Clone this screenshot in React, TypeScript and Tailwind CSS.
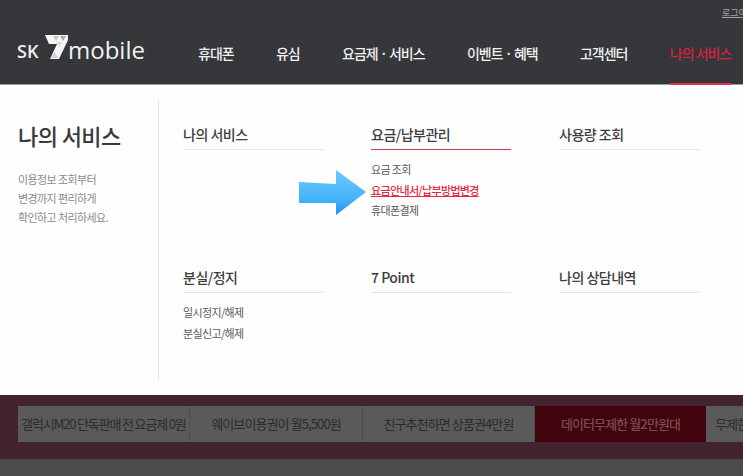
const font = { fontFamily: '"Noto Sans CJK KR", "Noto Sans", sans-serif' };

const nav = ["휴대폰", "유심", "요금제 · 서비스", "이벤트 · 혜택", "고객센터"];
const tabs = [
  { label: "갤럭시M20 단독판매 전 요금제 0원", w: "w-[172px] tracking-[-1.15px]" },
  { label: "웨이브이용권이 월5,500원", w: "w-[173px] tracking-[-0.9px]" },
  { label: "친구추천하면 상품권4만원", w: "w-[172px] tracking-[-0.9px]" },
];

function Logo() {
  return (
    <div className="flex items-end h-[24px]">
      <span className="text-[18px] leading-[18px] font-semibold text-[#f1f1f1] w-[28px] shrink-0 -mb-[1px]" style={{ fontFamily: '"Open Sans", sans-serif' }}>SK</span>
      <svg width="24" height="24" viewBox="0 0 24 24" className="shrink-0">
        <polygon points="0,0 23,0 23,5 14,24 5,24 12,9 4,9" fill="#f6f6f6" />
        <polygon points="8,1 14,1 11,6" fill="#c6c6c8" />
        <polygon points="15,1 21,1 18,6" fill="#a9a9ab" />
        <polygon points="11,7 17,7 14,12" fill="#dcdcdd" />
        <polygon points="6,23 9.5,17 13,23" fill="#cfcfd0" />
      </svg>
      <span className="text-[24px] leading-[24px] font-medium text-[#f1f1f1] -ml-[1px] -mb-[3px]" style={{ fontFamily: '"Open Sans", sans-serif' }}>mobile</span>
    </div>
  );
}

function Group({ title, active, items = [] }: { title: string; active?: boolean; items?: { t: string; on?: boolean }[] }) {
  return (
    <div className="w-[140px]">
      <div className={`h-[27px] border-b text-[14px] leading-[22px] font-medium tracking-[-0.5px] text-[#3d3d3d] ${active ? "border-[#d9364a]" : "border-[#e4e4e4]"}`}>{title}</div>
      <ul className="pt-[9px] whitespace-nowrap">
        {items.map((i) => (
          <li key={i.t} className={`h-[20.5px] text-[11px] leading-[20px] tracking-[-0.65px] ${i.on ? "text-[#e5274a] underline font-medium" : "text-[#5a5a5a]"}`}>{i.t}</li>
        ))}
      </ul>
    </div>
  );
}

export default function App() {
  return (
    <div className="relative w-[743px] h-[476px] overflow-hidden bg-[#4b4b4b]" style={font}>
      <header className="relative h-[85px] bg-[#36373b] border-b border-[#9a9a9c] flex items-start">
        <div className="absolute right-0 top-[7px] text-[9px] leading-[12px] text-[#a5a5a7] underline w-[21px] overflow-hidden whitespace-nowrap">로그아웃</div>
        <div className="ml-[17px] mt-[35px] w-[181px] shrink-0"><Logo /></div>
        <nav className="flex gap-[42.3px] mt-[43px] h-[42px] whitespace-nowrap tracking-[-1px]">
          {nav.map((n) => (
            <span key={n} className="text-[14px] leading-[20px] font-medium text-[#f0f0f0]">{n}</span>
          ))}
          <span className="h-[42px] border-b-2 border-[#e8304f] text-[14px] leading-[20px] font-medium text-[#d8203f]">나의 서비스</span>
        </nav>
      </header>

      <main className="relative h-[310px] bg-[#fefefe] flex pt-[15px]">
        <aside className="w-[159px] h-[280px] border-r border-[#e2e2e2] pl-[18px] pt-[19px] shrink-0">
          <h1 className="text-[22px] leading-[32px] font-medium tracking-[-0.6px] text-[#3a3a3c]">나의 서비스</h1>
          <p className="mt-[19px] text-[11px] leading-[19px] tracking-[-0.6px] text-[#8a8a8a]">이용정보 조회부터<br />변경까지 편리하게<br />확인하고 처리하세요.</p>
        </aside>
        <div className="ml-[24px] grid grid-cols-[140px_140px_140px] grid-rows-[143px_auto] gap-x-[48px] pt-[23px]">
          <Group title="나의 서비스" />
          <Group title="요금/납부관리" active items={[{ t: "요금 조회" }, { t: "요금안내서/납부방법변경", on: true }, { t: "휴대폰결제" }]} />
          <Group title="사용량 조회" />
          <Group title="분실/정지" items={[{ t: "일시정지/해제" }, { t: "분실신고/해제" }]} />
          <Group title="7 Point" />
          <Group title="나의 상담내역" />
        </div>
        <svg className="absolute left-[299px] top-[85px]" width="67" height="46" viewBox="0 0 67 46">
          <defs>
            <linearGradient id="a" x1="0" y1="0" x2="0" y2="1">
              <stop offset="0" stopColor="#6cc8ff" />
              <stop offset="0.65" stopColor="#45b4fb" />
              <stop offset="1" stopColor="#1f8ff0" />
            </linearGradient>
          </defs>
          <polygon points="0,12 37,14 37,0 67,22 37,45 37,33 0,33" fill="url(#a)" />
        </svg>
      </main>

      <section className="h-[64px] bg-[#412430] pt-[11px] pl-[18px] flex items-start whitespace-nowrap">
        {tabs.map((t) => (
          <div key={t.label} className={`${t.w} h-[36px] shrink-0 bg-[#5a5a5a] border-r border-[#4e4e4e] text-[13px] leading-[36px] text-center text-[#2b2b2b]`}>{t.label}</div>
        ))}
        <div className="w-[171px] h-[36px] shrink-0 bg-[#42040c] text-[13px] leading-[36px] text-center font-medium text-[#7a4a50] tracking-[-0.9px]">데이터무제한 월2만원대</div>
        <div className="flex-1 h-[36px] bg-[#5a5a5a] pl-[9px] text-[13px] leading-[36px] text-[#2b2b2b] overflow-hidden tracking-[-0.9px]">무제한요금제</div>
      </section>
    </div>
  );
}
